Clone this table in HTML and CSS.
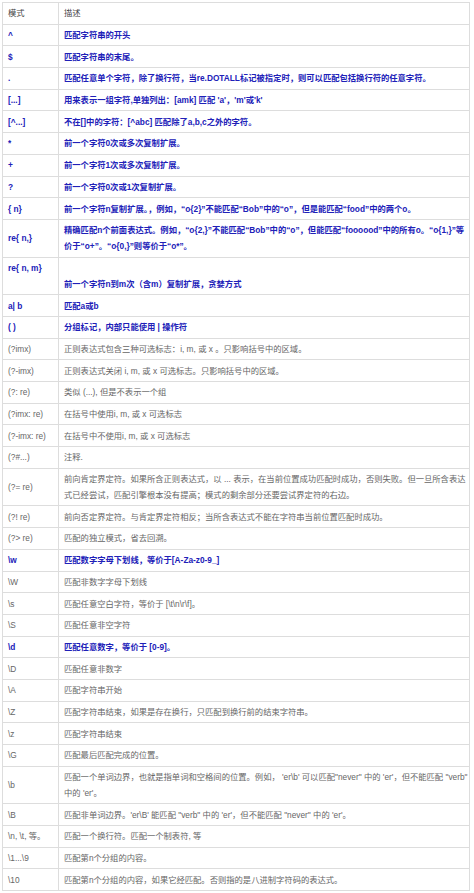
FILE: index.html
```html
<!DOCTYPE html>
<html lang="zh-CN">
<head>
<meta charset="utf-8">
<title>正则表达式模式</title>
<link rel="stylesheet" href="styles.css">
</head>
<body>
<div class="page">
<table class="regex">
<colgroup><col class="col-pat"><col class="col-desc"></colgroup>
<thead>
<tr><th>模式</th><th>描述</th></tr>
</thead>
<tbody>
<tr class="hl"><td>^</td><td>匹配字符串的开头</td></tr>
<tr class="hl"><td>$</td><td>匹配字符串的末尾。</td></tr>
<tr class="hl"><td>.</td><td>匹配任意单个字符，除了换行符，当re.DOTALL标记被指定时，则可以匹配包括换行符的任意字符。</td></tr>
<tr class="hl"><td>[...]</td><td>用来表示一组字符,单独列出：[amk] 匹配 'a'，'m'或'k'</td></tr>
<tr class="hl"><td>[^...]</td><td>不在[]中的字符：[^abc] 匹配除了a,b,c之外的字符。</td></tr>
<tr class="hl"><td>*</td><td>前一个字符0次或多次复制扩展。</td></tr>
<tr class="hl"><td>+</td><td>前一个字符1次或多次复制扩展。</td></tr>
<tr class="hl"><td>?</td><td>前一个字符0次或1次复制扩展。</td></tr>
<tr class="hl"><td>{ n}</td><td>前一个字符n复制扩展。，例如，“o{2}”不能匹配“Bob”中的“o”，但是能匹配“food”中的两个o。</td></tr>
<tr class="hl"><td>re{ n,}</td><td>精确匹配n个前面表达式。例如，“o{2,}”不能匹配“Bob”中的“o”，但能匹配“foooood”中的所有o。“o{1,}”等<br>价于“o+”。“o{0,}”则等价于“o*”。</td></tr>
<tr class="hl"><td>re{ n, m}<br>&nbsp;</td><td>&nbsp;<br>前一个字符n到m次（含m）复制扩展，贪婪方式</td></tr>
<tr class="hl"><td>a| b</td><td>匹配a或b</td></tr>
<tr class="hl"><td>( )</td><td>分组标记，内部只能使用 | 操作符</td></tr>
<tr><td>(?imx)</td><td>正则表达式包含三种可选标志：i, m, 或 x 。只影响括号中的区域。</td></tr>
<tr><td>(?-imx)</td><td>正则表达式关闭 i, m, 或 x 可选标志。只影响括号中的区域。</td></tr>
<tr><td>(?: re)</td><td>类似 (...), 但是不表示一个组</td></tr>
<tr><td>(?imx: re)</td><td>在括号中使用i, m, 或 x 可选标志</td></tr>
<tr><td>(?-imx: re)</td><td>在括号中不使用i, m, 或 x 可选标志</td></tr>
<tr><td>(?#...)</td><td>注释.</td></tr>
<tr><td>(?= re)</td><td>前向肯定界定符。如果所含正则表达式，以 ... 表示，在当前位置成功匹配时成功，否则失败。但一旦所含表达<br>式已经尝试，匹配引擎根本没有提高；模式的剩余部分还要尝试界定符的右边。</td></tr>
<tr><td>(?! re)</td><td>前向否定界定符。与肯定界定符相反；当所含表达式不能在字符串当前位置匹配时成功。</td></tr>
<tr><td>(?&gt; re)</td><td>匹配的独立模式，省去回溯。</td></tr>
<tr class="hl"><td>\w</td><td>匹配数字字母下划线，等价于[A-Za-z0-9_]</td></tr>
<tr><td>\W</td><td>匹配非数字字母下划线</td></tr>
<tr><td>\s</td><td>匹配任意空白字符，等价于 [\t\n\r\f]。</td></tr>
<tr><td>\S</td><td>匹配任意非空字符</td></tr>
<tr class="hl"><td>\d</td><td>匹配任意数字，等价于 [0-9]。</td></tr>
<tr><td>\D</td><td>匹配任意非数字</td></tr>
<tr><td>\A</td><td>匹配字符串开始</td></tr>
<tr><td>\Z</td><td>匹配字符串结束，如果是存在换行，只匹配到换行前的结束字符串。</td></tr>
<tr><td>\z</td><td>匹配字符串结束</td></tr>
<tr><td>\G</td><td>匹配最后匹配完成的位置。</td></tr>
<tr><td>\b</td><td>匹配一个单词边界，也就是指单词和空格间的位置。例如， 'er\b' 可以匹配"never" 中的 'er'，但不能匹配 "verb"<br>中的 'er'。</td></tr>
<tr><td>\B</td><td>匹配非单词边界。'er\B' 能匹配 "verb" 中的 'er'，但不能匹配 "never" 中的 'er'。</td></tr>
<tr><td>\n, \t, 等。</td><td>匹配一个换行符。匹配一个制表符, 等</td></tr>
<tr><td>\1...\9</td><td>匹配第n个分组的内容。</td></tr>
<tr><td>\10</td><td>匹配第n个分组的内容，如果它经匹配。否则指的是八进制字符码的表达式。</td></tr>
</tbody>
</table>
</div>
</body>
</html>
```
FILE: styles.css
```css
html, body {
  margin: 0;
  padding: 0;
  background: #ffffff;
}
.page {
  padding: 2px 4px 0 2px;
}
.regex {
  width: 100%;
  table-layout: fixed;
  border-collapse: collapse;
  font-family: "Liberation Sans", "Noto Sans CJK SC", sans-serif;
  font-size: 8.3px;
  line-height: 16px;
  color: #666666;
}
.col-pat {
  width: 56px;
}
.regex th,
.regex td {
  border: 1px solid #dddddd;
  padding: 2.35px 5px;
  text-align: left;
  vertical-align: middle;
  font-weight: normal;
  white-space: nowrap;
  overflow: hidden;
}
.regex th {
  color: #444444;
}
.regex tr.hl td {
  color: #2020b8;
  font-weight: bold;
}
```
